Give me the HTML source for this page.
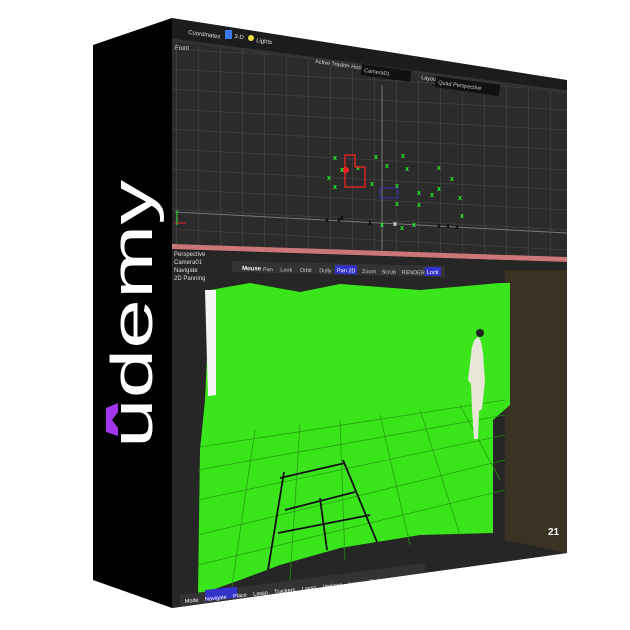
<!DOCTYPE html>
<html><head><meta charset="utf-8"><style>
html,body{margin:0;padding:0;background:#fff;width:630px;height:630px;overflow:hidden}
svg{display:block}
text{font-family:"Liberation Sans",sans-serif}
</style></head><body>
<svg width="630" height="630" viewBox="0 0 630 630" xmlns="http://www.w3.org/2000/svg">
<defs>
<clipPath id="face"><polygon points="172,18 567,80 567,553 172,608"/></clipPath>
<clipPath id="top"><polygon points="172,40 567,92 567,258 172,245"/></clipPath>
<pattern id="grid" width="22" height="20" patternUnits="userSpaceOnUse" patternTransform="skewY(3)">
<rect width="22" height="20" fill="#2b2b2b"/>
<path d="M0 0H22M0 0V20" stroke="#4a4a4a" stroke-width="1"/>
</pattern>
</defs>
<!-- spine -->
<polygon points="93,45 172,18 172,608 93,580" fill="#000"/>
<text x="0" y="0" transform="translate(152,448) rotate(-90)" font-size="58" fill="#fff" textLength="268" lengthAdjust="spacingAndGlyphs">udemy</text>
<polygon points="106,408 118,403 118,412 112,420 118,428 118,436 106,432" fill="#a435f0"/>
<!-- front face -->
<g clip-path="url(#face)">
<rect x="172" y="0" width="400" height="630" fill="#1c1c1c"/>
<rect x="172" y="0" width="400" height="300" fill="url(#grid)" clip-path="url(#top)"/>
<line x1="172" y1="40" x2="567" y2="92" stroke="#333" stroke-width="3"/>
<line x1="382" y1="85" x2="382" y2="250" stroke="#777" stroke-width="1"/>
<line x1="175" y1="212" x2="567" y2="233" stroke="#777" stroke-width="1"/>
<text x="188" y="34" font-size="6" fill="#ddd" transform="rotate(8 188 34)">Coordinates</text>
<rect x="225" y="30" width="7" height="9" fill="#3a7af0"/>
<text x="234" y="38" font-size="6" fill="#ddd" transform="rotate(8 234 38)">3-D</text>
<circle cx="251" cy="38" r="3" fill="#f0e040"/>
<text x="256" y="42" font-size="6" fill="#ddd" transform="rotate(8 256 42)">Lights</text>
<text x="175" y="50" font-size="6" fill="#ddd">Front</text>
<text x="315" y="63" font-size="5.5" fill="#ddd" transform="rotate(8 315 63)">Active Tracker Host</text>
<rect x="362" y="64" width="50" height="11" fill="#111" transform="rotate(8 362 64)"/>
<text x="364" y="72" font-size="5.5" fill="#ccc" transform="rotate(8 364 72)">Camera01</text>
<text x="421" y="79" font-size="5.5" fill="#ddd" transform="rotate(8 421 79)">Layout</text>
<rect x="436" y="76" width="65" height="11" fill="#111" transform="rotate(8 436 76)"/>
<text x="438" y="84" font-size="5.5" fill="#ccc" transform="rotate(8 438 84)">Quad Perspective</text>
<g font-size="7" fill="#2f2" font-weight="bold">
<text x="333" y="160">x</text><text x="340" y="172">x</text><text x="356" y="170">x</text><text x="374" y="159">x</text><text x="385" y="168">x</text><text x="401" y="158">x</text><text x="405" y="171">x</text><text x="437" y="170">x</text><text x="450" y="181">x</text><text x="437" y="191">x</text><text x="430" y="197">x</text><text x="395" y="206">x</text><text x="417" y="207">x</text><text x="417" y="195">x</text><text x="458" y="200">x</text><text x="460" y="218">x</text><text x="327" y="180">x</text><text x="333" y="189">x</text><text x="395" y="188">x</text><text x="370" y="186">x</text><text x="380" y="227">x</text><text x="400" y="230">x</text><text x="412" y="227">x</text>
</g>
<g font-size="7" fill="#000" font-weight="bold"><text x="325" y="222">x</text><text x="337" y="222">x</text><text x="340" y="220">x</text><text x="368" y="225">x</text><text x="437" y="228">x</text><text x="446" y="228">x</text><text x="455" y="229">x</text></g>
<text x="393" y="226" font-size="7" fill="#fff" font-weight="bold">x</text>
<path d="M345 155 h10 v12 h10 v20 h-20 z" fill="none" stroke="#d22" stroke-width="1.5"/>
<circle cx="346" cy="170" r="3" fill="#e22"/>
<rect x="380" y="188" width="18" height="10" fill="none" stroke="#33c" stroke-width="0.8"/>
<line x1="175" y1="223" x2="186" y2="223" stroke="#e22"/><line x1="177" y1="210" x2="177" y2="225" stroke="#2d2"/>
<polygon points="172,244 567,257 567,262 172,249" fill="#c77"/>
<!-- lower viewport -->
<polygon points="172,250 567,262 567,620 172,620" fill="#262626"/>
<polygon points="505,270 567,270 567,553 505,540" fill="#3a3222"/>
<polygon points="210,290 250,283 300,292 340,284 420,290 500,283 510,283 510,405 493,420 493,533 420,535 340,548 280,565 240,580 198,595 200,450 205,400" fill="#3ae51c"/>
<polygon points="205,290 216,290 216,395 208,396" fill="#f4f4f4"/>
<g stroke="#239a0c" stroke-width="0.8" opacity="0.9">
<line x1="200" y1="447" x2="505" y2="400"/><line x1="198" y1="470" x2="505" y2="415"/><line x1="198" y1="500" x2="505" y2="435"/><line x1="198" y1="535" x2="505" y2="460"/><line x1="198" y1="565" x2="505" y2="490"/>
<line x1="255" y1="430" x2="230" y2="600"/><line x1="300" y1="425" x2="290" y2="580"/><line x1="340" y1="420" x2="345" y2="560"/><line x1="380" y1="415" x2="410" y2="545"/><line x1="420" y1="410" x2="460" y2="535"/><line x1="460" y1="405" x2="500" y2="480"/>
</g>
<g stroke="#111" stroke-width="1.8"><line x1="284" y1="472" x2="268" y2="570"/><line x1="343" y1="460" x2="377" y2="542"/><line x1="280" y1="478" x2="345" y2="463"/><line x1="285" y1="510" x2="355" y2="492"/><line x1="278" y1="533" x2="370" y2="515"/><line x1="320" y1="498" x2="327" y2="550"/></g>
<path d="M478 337 q-6 3 -7 18 l-3 25 l3 4 l1 25 l2 30 l4 0 l1 -28 l3 -2 l3 -28 l-2 -28 q-2 -15 -5 -16z" fill="#e8e6d8"/>
<circle cx="480" cy="333" r="4" fill="#222"/>
<polygon points="232,261 445,266 445,277 232,272" fill="#333"/>
<text x="242" y="270" font-size="6" fill="#fff" font-weight="bold" transform="rotate(1.3 242 270)">Mouse</text>
<text x="263" y="271" font-size="5.5" fill="#ccc" transform="rotate(1.3 263 271)" word-spacing="6">Pan  Look  Orbit  Dolly</text>
<rect x="335" y="265" width="22" height="9" fill="#33c" transform="rotate(1.3 335 265)"/>
<text x="337" y="272" font-size="5.5" fill="#fff" transform="rotate(1.3 337 272)">Pan 2D</text>
<text x="362" y="273" font-size="5.5" fill="#ccc" transform="rotate(1.3 362 273)" word-spacing="4">Zoom  Scrub  RENDER</text>
<rect x="425" y="267" width="16" height="9" fill="#33c"/><text x="427" y="274" font-size="5.5" fill="#fff">Lock</text>
<text x="174" y="256" font-size="6" fill="#ddd">Perspective</text>
<text x="174" y="264" font-size="6" fill="#ddd">Camera01</text>
<text x="174" y="272" font-size="6" fill="#ddd">Navigate</text>
<text x="174" y="280" font-size="6" fill="#ddd">2D Panning</text>
<polygon points="180,595 425,563 425,573 180,607" fill="#333"/>
<rect x="205" y="590" width="32" height="11" fill="#33c" transform="rotate(-6 205 590)"/>
<text x="185" y="603" font-size="5.5" fill="#fff" transform="rotate(-6 185 603)" word-spacing="5">Mode  Navigate  Place  Lasso Trackers  Lasso Vertices  Lasso Entire Meshes  Create</text>
<text x="548" y="535" font-size="10" fill="#fff" font-weight="bold">21</text>
<rect x="575" y="285" width="6" height="40" fill="#44f"/>
</g>
</svg>
</body></html>
